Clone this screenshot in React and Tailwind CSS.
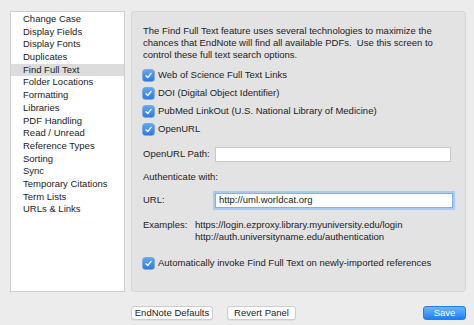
import React from 'react';

const sections = [
  'Change Case',
  'Display Fields',
  'Display Fonts',
  'Duplicates',
  'Find Full Text',
  'Folder Locations',
  'Formatting',
  'Libraries',
  'PDF Handling',
  'Read / Unread',
  'Reference Types',
  'Sorting',
  'Sync',
  'Temporary Citations',
  'Term Lists',
  'URLs & Links',
];

const Check = () => (
  <span className="flex h-[11px] w-[11px] shrink-0 items-center justify-center rounded-[2px] bg-gradient-to-b from-[#5aa7f7] to-[#2a7ae6] shadow-[0_0_0_0.5px_#2a6fd0]">
    <svg viewBox="0 0 10 10" className="h-[9px] w-[9px]">
      <path d="M2.2 5.2 L4.2 7.2 L7.9 2.6" fill="none" stroke="white" strokeWidth="1.5" strokeLinecap="round" strokeLinejoin="round" />
    </svg>
  </span>
);

const CheckRow = ({ children }) => (
  <div className="flex h-[18px] items-center gap-[4px]">
    <Check />
    <span>{children}</span>
  </div>
);

export default function App() {
  const active = 'Find Full Text';
  return (
    <div
      className="flex h-[325px] w-[474px] flex-col bg-[#ececec] text-[9.5px] text-[#222]"
      style={{ fontFamily: '"Liberation Sans", Arial, sans-serif' }}
    >
      <div className="flex gap-[6px] pl-[10px] pt-[11px]">
        {/* sidebar list */}
        <div className="h-[281px] w-[115px] border border-[#cfcfcf] bg-white pt-[1px]">
          {sections.map((s) => (
            <div
              key={s}
              className={`h-[12.7px] pl-[12px] leading-[12.7px] ${s === active ? 'bg-[#dcdcdc]' : ''}`}
            >
              {s}
            </div>
          ))}
        </div>

        {/* settings panel */}
        <div className="h-[281px] w-[335px] rounded-[3px] border border-[#d6d6d6] bg-[#e3e3e3] pl-[11px] pt-[13px]">
          <p className="w-[300px] leading-[12px]">
            The Find Full Text feature uses several technologies to maximize the chances that EndNote will find all available PDFs.&nbsp; Use this screen to control these full text search options.
          </p>

          <div className="mt-[5px]">
            <CheckRow>Web of Science Full Text Links</CheckRow>
            <CheckRow>DOI (Digital Object Identifier)</CheckRow>
            <CheckRow>PubMed LinkOut (U.S. National Library of Medicine)</CheckRow>
            <CheckRow>OpenURL</CheckRow>
          </div>

          <div className="mt-[9px] flex items-center">
            <span className="w-[72px]">OpenURL Path:</span>
            <div className="h-[15px] w-[236px] border border-[#c9c9c9] bg-white" />
          </div>

          <div className="mt-[9px] leading-[12px]">Authenticate with:</div>

          <div className="mt-[10px] flex items-center">
            <span className="w-[72px]">URL:</span>
            <div className="flex h-[15px] w-[238px] items-center border border-[#7fb1ea] bg-white pl-[3px] shadow-[0_0_0_2px_#a9cbf2]">
              http://uml.worldcat.org
            </div>
          </div>

          <div className="mt-[11px] flex leading-[12px]">
            <span className="w-[52px]">Examples:</span>
            <div>
              <div>https://login.ezproxy.library.myuniversity.edu/login</div>
              <div>http://auth.universityname.edu/authentication</div>
            </div>
          </div>

          <div className="mt-[11px]">
            <CheckRow>Automatically invoke Find Full Text on newly-imported references</CheckRow>
          </div>
        </div>
      </div>

      {/* bottom buttons */}
      <div className="mt-[14px] flex items-center pl-[131px] pr-[8px]">
        <button className="h-[14px] w-[82px] rounded-[3px] border border-[#cdcdcd] bg-white leading-[12px] shadow-[0_0.5px_0.5px_rgba(0,0,0,0.1)]">
          EndNote Defaults
        </button>
        <button className="ml-[14px] h-[14px] w-[69px] rounded-[3px] border border-[#cdcdcd] bg-white leading-[12px] shadow-[0_0.5px_0.5px_rgba(0,0,0,0.1)]">
          Revert Panel
        </button>
        <button className="ml-auto h-[14px] w-[43px] rounded-[3px] border border-[#2a7de0] bg-gradient-to-b from-[#6cb4fa] to-[#1c7ef5] leading-[12px] text-white">
          Save
        </button>
      </div>
    </div>
  );
}
